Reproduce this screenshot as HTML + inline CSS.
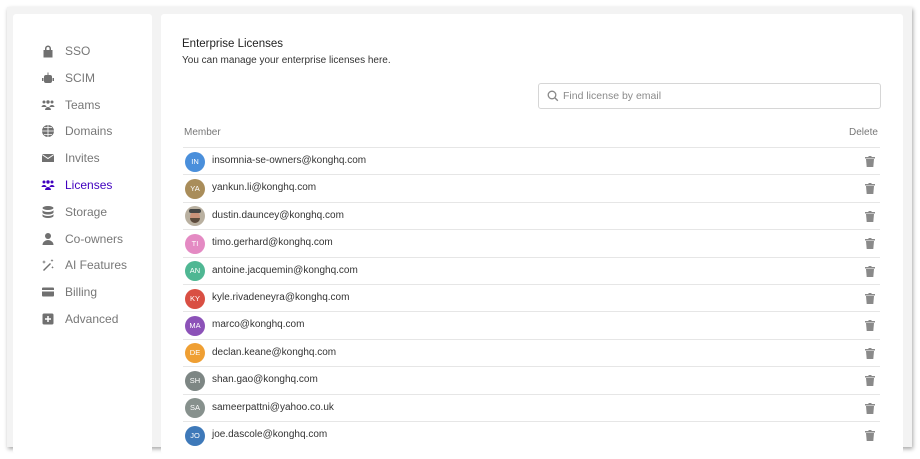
<!DOCTYPE html>
<html><head><style>
*{margin:0;padding:0;box-sizing:border-box}
body{width:920px;height:459px;background:#fff;font-family:"Liberation Sans",sans-serif;position:relative;overflow:hidden}
.outer{position:absolute;left:7px;top:7px;width:905px;height:440px;background:#f3f3f3;box-shadow:1px 2px 4px rgba(0,0,0,.35)}
.side{position:absolute;left:13px;top:14px;width:139px;height:440px;background:#fff;border-radius:3px}
.main{position:absolute;left:161px;top:14px;width:742px;height:440px;background:#fff;border-radius:3px}
.nav{position:absolute;left:41px;font-size:12px;color:#777;height:16px;line-height:16px}
.nav svg{position:absolute;left:0;top:1px;width:14px;height:14px;fill:#707070}
.nav span{position:absolute;left:24px;white-space:nowrap}
.act{color:#4000bf}.act svg{fill:#4000bf}
.row{position:absolute;left:183px;width:697px;height:27px;border-top:1px solid #e6e6e6;font-size:10px;color:#333}
.av{position:absolute;left:2px;top:3.5px;width:20px;height:20px;border-radius:50%;color:#fff;font-size:7.5px;text-align:center;line-height:20px}
.em{position:absolute;left:29px;top:7px}
.tr{position:absolute;right:5px;top:8px;width:10px;height:11px}
</style></head><body>
<div class="outer"></div>
<div class="side"></div>
<div class="main"></div>

<div class="nav" style="top:43px"><svg viewBox="0 0 14 14"><path d="M4 6V4.5a3 3 0 0 1 6 0V6h1.5v7.5h-9V6zM5.5 6h3V4.5a1.5 1.5 0 0 0-3 0z"/></svg><span>SSO</span></div>
<div class="nav" style="top:70px"><svg viewBox="0 0 14 14"><rect x="3" y="4" width="8" height="8" rx="2"/><rect x="1" y="7" width="1.5" height="3"/><rect x="11.5" y="7" width="1.5" height="3"/><rect x="6.5" y="1.5" width="1" height="2.5"/></svg><span>SCIM</span></div>
<div class="nav" style="top:97px"><svg viewBox="0 0 14 14"><circle cx="3" cy="4" r="1.5"/><circle cx="7" cy="4" r="1.7"/><circle cx="11" cy="4" r="1.5"/><path d="M0.5 9a2.5 2 0 0 1 5 0zM8.5 9a2.5 2 0 0 1 5 0zM4 12a3 3 0 0 1 6 0z"/></svg><span>Teams</span></div>
<div class="nav" style="top:123px"><svg viewBox="0 0 14 14"><circle cx="7" cy="7" r="6"/><path d="M1 7h12M7 1v12M3 3.5h8M3 10.5h8" stroke="#fff" stroke-width=".8" fill="none"/></svg><span>Domains</span></div>
<div class="nav" style="top:150px"><svg viewBox="0 0 14 14"><path d="M1 3h12v8H1z"/><path d="M1 3.5l6 4 6-4" stroke="#fff" stroke-width="1" fill="none"/></svg><span>Invites</span></div>
<div class="nav act" style="top:177px"><svg viewBox="0 0 14 14"><circle cx="3" cy="4" r="1.5"/><circle cx="7" cy="4" r="1.7"/><circle cx="11" cy="4" r="1.5"/><path d="M0.5 9a2.5 2 0 0 1 5 0zM8.5 9a2.5 2 0 0 1 5 0zM4 12a3 3 0 0 1 6 0z"/></svg><span>Licenses</span></div>
<div class="nav" style="top:204px"><svg viewBox="0 0 14 14"><ellipse cx="7" cy="3" rx="5.5" ry="2"/><path d="M1.5 5a5.5 2 0 0 0 11 0v2.5a5.5 2 0 0 1-11 0zM1.5 9a5.5 2 0 0 0 11 0v2a5.5 2 0 0 1-11 0z"/></svg><span>Storage</span></div>
<div class="nav" style="top:231px"><svg viewBox="0 0 14 14"><circle cx="7" cy="4" r="3"/><path d="M1.5 13a5.5 5 0 0 1 11 0z"/></svg><span>Co-owners</span></div>
<div class="nav" style="top:257px"><svg viewBox="0 0 14 14"><path d="M2 12l7-7 1 1-7 7z"/><path d="M3 2l.5 1.5L5 4l-1.5.5L3 6l-.5-1.5L1 4l1.5-.5zM11 1l.4 1L12.5 2.5l-1 .4L11 4l-.4-1L9.5 2.5l1-.4zM11.5 8l.4 1 1 .4-1 .4-.4 1-.4-1-1-.4 1-.4z"/></svg><span>AI Features</span></div>
<div class="nav" style="top:284px"><svg viewBox="0 0 14 14"><rect x="1" y="2.5" width="12" height="9" rx="1"/><rect x="1" y="5" width="12" height="1.5" fill="#fff"/></svg><span>Billing</span></div>
<div class="nav" style="top:311px"><svg viewBox="0 0 14 14"><rect x="1.5" y="1.5" width="11" height="11" rx="1.5"/><path d="M7 4v6M4 7h6" stroke="#fff" stroke-width="1.5"/></svg><span>Advanced</span></div>

<div style="position:absolute;left:182px;top:38px;font-size:11.5px;color:#222">Enterprise Licenses</div>
<div style="position:absolute;left:182px;top:55px;font-size:10px;color:#333">You can manage your enterprise licenses here.</div>
<div style="position:absolute;left:538px;top:83px;width:343px;height:26px;border:1px solid #d6d6d6;border-radius:3px">
<svg style="position:absolute;left:8px;top:6px" width="12" height="12" viewBox="0 0 12 12"><circle cx="5" cy="5" r="3.8" fill="none" stroke="#888" stroke-width="1.3"/><path d="M7.8 7.8l3 3" stroke="#888" stroke-width="1.4"/></svg>
<span style="position:absolute;left:24px;top:6px;font-size:10.5px;color:#8a8a8a">Find license by email</span></div>
<div style="position:absolute;left:184px;top:127px;font-size:10px;color:#777">Member</div>
<div style="position:absolute;left:849px;top:127px;font-size:10px;color:#777">Delete</div>

<div id="rows"></div>
<script>
var d=[["IN","#4a8fdb","insomnia-se-owners@konghq.com"],["YA","#a98d5a","yankun.li@konghq.com"],["","#777","dustin.dauncey@konghq.com"],["TI","#e48ac3","timo.gerhard@konghq.com"],["AN","#4fb793","antoine.jacquemin@konghq.com"],["KY","#d94f43","kyle.rivadeneyra@konghq.com"],["MA","#8c52b8","marco@konghq.com"],["DE","#ef9f33","declan.keane@konghq.com"],["SH","#7d8684","shan.gao@konghq.com"],["SA","#87918d","sameerpattni@yahoo.co.uk"],["JO","#3e79b9","joe.dascole@konghq.com"]];
var h="";d.forEach(function(r,i){var t=147+i*27.4;
var av=r[0]?'<div class="av" style="background:'+r[1]+'">'+r[0]+'</div>':'<div class="av" style="background:#b9b0a0;overflow:hidden"><div style="position:absolute;left:5px;top:5px;width:10px;height:12px;border-radius:50%;background:#c9927a"></div><div style="position:absolute;left:4px;top:3px;width:12px;height:4px;border-radius:3px;background:#444"></div><div style="position:absolute;left:5px;top:12px;width:10px;height:5px;border-radius:0 0 5px 5px;background:#5a4a3c"></div></div>';
h+='<div class="row" style="top:'+t+'px">'+av+'<div class="em">'+r[2]+'</div><svg class="tr" viewBox="0 0 10 11"><rect x="0" y="1" width="10" height="1.5" fill="#8a8a8a"/><rect x="3.5" y="0" width="3" height="1.5" fill="#8a8a8a"/><path d="M1 3h8l-.7 8H1.7z" fill="#8a8a8a"/></svg></div>';});
document.getElementById("rows").innerHTML=h;
</script>
</body></html>
